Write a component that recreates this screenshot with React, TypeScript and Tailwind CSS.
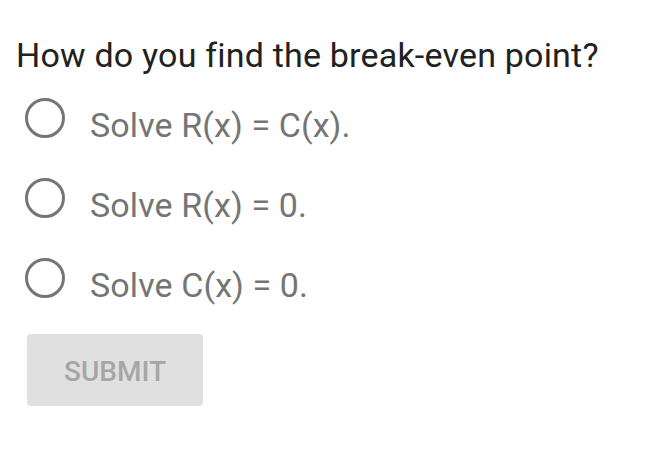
import React from 'react'

const options = ['Solve R(x) = C(x).', 'Solve R(x) = 0.', 'Solve C(x) = 0.']

export default function App() {
  return (
    <div className="w-[660px] h-[456px] bg-white pt-[35px] pl-[16px]" style={{ fontFamily: 'Roboto, sans-serif' }}>
      <h1 className="text-[34px] leading-[40px] tracking-[0.2px] text-[#212121]">How do you find the break-even point?</h1>
      <div className="mt-[3px] flex flex-col">
        {options.map((o) => (
          <label key={o} className="flex items-center h-[80px]">
            <span className="ml-[9px] w-[40px] h-[40px] rounded-full border-[3.5px] border-[#757575]" />
            <span className="ml-[25px] mt-[14px] text-[34px] leading-[40px] tracking-[0.1px] text-[#757575]">{o}</span>
          </label>
        ))}
      </div>
      <button className="mt-[16px] ml-[11px] w-[176px] h-[72px] pt-[4px] rounded-[4px] bg-[#e0e0e0] text-[#a6a6a6] text-[28px] font-medium">
        SUBMIT
      </button>
    </div>
  )
}
